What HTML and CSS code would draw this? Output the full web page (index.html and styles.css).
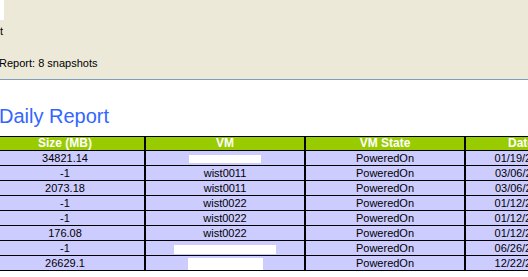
FILE: index.html
```html
<!DOCTYPE html>
<html lang="en">
<head>
    <meta charset="UTF-8">
    <meta name="viewport" content="width=device-width, initial-scale=1.0">
    <title>Daily Report</title>
    <link rel="stylesheet" href="styles.css">
</head>
<body>
    <div id="toolbar">
        <div class="field"></div>
        <p class="title">t</p>
        <p class="summary">Report: 8 snapshots</p>
    </div>

    <h1 id="report-title">Daily Report</h1>

    <table id="snapshot-table">
        <colgroup>
            <col class="col-size">
            <col class="col-vm">
            <col class="col-state">
            <col class="col-date">
        </colgroup>
        <tr>
            <th>Size (MB)</th>
            <th>VM</th>
            <th>VM State</th>
            <th>Date Created</th>
        </tr>
        <tr>
            <td>34821.14</td>
            <td><span class="hidden-name name-short"></span></td>
            <td>PoweredOn</td>
            <td>01/19/2013 10:22:31</td>
        </tr>
        <tr>
            <td>-1</td>
            <td>wist0011</td>
            <td>PoweredOn</td>
            <td>03/06/2013 11:04:52</td>
        </tr>
        <tr>
            <td>2073.18</td>
            <td>wist0011</td>
            <td>PoweredOn</td>
            <td>03/06/2013 11:40:17</td>
        </tr>
        <tr>
            <td>-1</td>
            <td>wist0022</td>
            <td>PoweredOn</td>
            <td>01/12/2013 09:15:44</td>
        </tr>
        <tr>
            <td>-1</td>
            <td>wist0022</td>
            <td>PoweredOn</td>
            <td>01/12/2013 09:31:08</td>
        </tr>
        <tr>
            <td>176.08</td>
            <td>wist0022</td>
            <td>PoweredOn</td>
            <td>01/12/2013 10:02:26</td>
        </tr>
        <tr>
            <td>-1</td>
            <td><span class="hidden-name name-long"></span></td>
            <td>PoweredOn</td>
            <td>06/26/2012 14:48:19</td>
        </tr>
        <tr>
            <td>26629.1</td>
            <td><span class="hidden-name name-tall"></span></td>
            <td>PoweredOn</td>
            <td>12/22/2012 16:12:55</td>
        </tr>
    </table>
</body>
</html>
```

FILE: styles.css
```css
html, body {
    margin: 0;
    padding: 0;
    overflow: hidden;
}

body {
    font-family: "Liberation Sans", Arial, sans-serif;
    font-size: 11px;
    background-color: #fff;
    color: #000;
}

#toolbar {
    height: 79px;
    background-color: #ece9d8;
    border-bottom: 1px solid #7f9db9;
}

#toolbar .field {
    width: 4px;
    height: 20px;
    background-color: #fff;
}

#toolbar p {
    margin: 0;
    line-height: 13px;
}

#toolbar .title {
    margin-top: 5px;
}

#toolbar .summary {
    margin-top: 19px;
    margin-left: -1px;
}

#report-title {
    margin: 24px 0 8px -1px;
    font-size: 20px;
    line-height: 24px;
    font-weight: normal;
    color: #3366ff;
}

#snapshot-table {
    border-collapse: collapse;
    table-layout: fixed;
    width: 640px;
    margin-left: -16px;
}

#snapshot-table col {
    width: 160px;
}

#snapshot-table th,
#snapshot-table td {
    border-top: 1px solid #000;
    border-bottom: 1px solid #000;
    border-left: 2px solid #000;
    border-right: 2px solid #000;
    padding: 0;
    height: 14px;
    line-height: 14px;
    text-align: center;
    white-space: nowrap;
    overflow: hidden;
}

#snapshot-table th {
    background-color: #99cc00;
    color: #fff;
    font-size: 12px;
    font-weight: bold;
    height: 13px;
    line-height: 13px;
}

#snapshot-table td {
    background-color: #ccccff;
}

/* names blanked out in the export */
.hidden-name {
    display: inline-block;
    background-color: #fff;
    vertical-align: middle;
}

.name-short {
    width: 72px;
    height: 8px;
}

.name-long {
    width: 102px;
    height: 9px;
}

.name-tall {
    width: 75px;
    height: 12px;
}
```
